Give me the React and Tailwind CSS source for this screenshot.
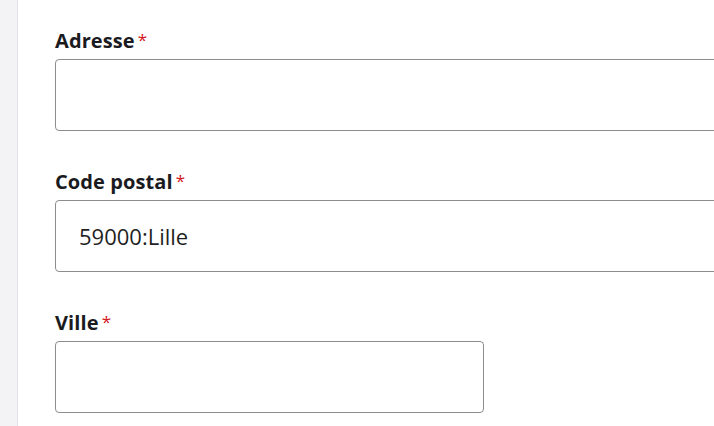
export default function App() {
  const font = { fontFamily: '"Open Sans", "Noto Sans", sans-serif' };
  const Field = ({ label, value, narrow }) => (
    <div className="flex flex-col">
      <div className="flex items-start h-[20px] mb-[8px]">
        <span className="text-[20px] font-bold leading-[20px] text-[#1b1b1f] tracking-[0.1px]">{label}</span>
        <span className="text-[#d4151c] text-[17px] leading-[16px] ml-[3px] mt-[1px]">*</span>
      </div>
      <div
        className={`${narrow ? "w-[429px]" : "w-[720px]"} h-[72px] border border-[#8d8d8d] rounded-[4px] bg-white flex items-center pl-[23px]`}
      >
        <span className="text-[22px] text-[#1f1f1f] leading-[24px]">{value}</span>
      </div>
    </div>
  );
  return (
    <div className="w-[714px] h-[426px] overflow-hidden bg-white flex" style={font}>
      <div className="w-[18px] shrink-0 bg-[#f3f3f6] border-r border-[#e3e3ec]" />
      <div className="flex flex-col pl-[37px] pt-[31px] gap-[41px]">
        <Field label="Adresse" value="" />
        <Field label="Code postal" value="59000:Lille" />
        <Field label="Ville" value="" narrow />
      </div>
    </div>
  );
}
